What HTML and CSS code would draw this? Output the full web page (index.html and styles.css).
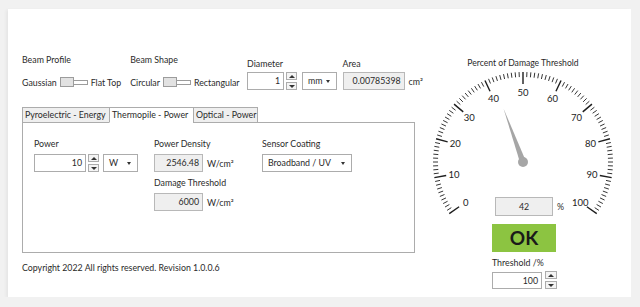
FILE: index.html
```html
<!DOCTYPE html>
<html lang="en">
<head>
    <meta charset="UTF-8">
    <meta name="viewport" content="width=device-width, initial-scale=1.0">
    <title>Damage Threshold Calculator</title>
    <link rel="stylesheet" href="styles.css">
</head>
<body>
    <div class="window">
        <div class="main">
            <div class="beam-row">
                <div class="group profile">
                    <div class="label">Beam Profile</div>
                    <div class="toggle-row">
                        <span>Gaussian</span>
                        <span class="toggle"><span class="thumb"></span><span class="track"></span></span>
                        <span>Flat Top</span>
                    </div>
                </div>
                <div class="group shape">
                    <div class="label">Beam Shape</div>
                    <div class="toggle-row">
                        <span>Circular</span>
                        <span class="toggle"><span class="thumb"></span><span class="track"></span></span>
                        <span>Rectangular</span>
                    </div>
                </div>
                <div class="group diameter">
                    <div class="label">Diameter</div>
                    <div class="control-row">
                        <div class="input diameter-input">1</div>
                        <div class="spin"><span class="up"></span><span class="down"></span></div>
                        <div class="dropdown unit-drop">mm</div>
                    </div>
                </div>
                <div class="group area">
                    <div class="label">Area</div>
                    <div class="control-row">
                        <div class="input readonly area-input">0.00785398</div>
                        <span class="unit">cm²</span>
                    </div>
                </div>
            </div>

            <div class="tabs">
                <div class="tab tab-pyro">Pyroelectric - Energy</div>
                <div class="tab tab-thermo selected">Thermopile - Power</div>
                <div class="tab tab-optical">Optical - Power</div>
            </div>
            <div class="tab-panel">
                <div class="group power">
                    <div class="label">Power</div>
                    <div class="control-row">
                        <div class="input power-input">10</div>
                        <div class="spin"><span class="up"></span><span class="down"></span></div>
                        <div class="dropdown unit-drop">W</div>
                    </div>
                </div>
                <div class="group density">
                    <div class="label">Power Density</div>
                    <div class="control-row">
                        <div class="input readonly small-out">2546.48</div>
                        <span class="unit">W/cm²</span>
                    </div>
                    <div class="label second">Damage Threshold</div>
                    <div class="control-row">
                        <div class="input readonly small-out">6000</div>
                        <span class="unit">W/cm²</span>
                    </div>
                </div>
                <div class="group coating">
                    <div class="label">Sensor Coating</div>
                    <div class="control-row">
                        <div class="dropdown coating-drop">Broadband / UV</div>
                    </div>
                </div>
            </div>
            <div class="copyright">Copyright 2022 All rights reserved. Revision 1.0.0.6</div>
        </div>

        <div class="gauge">
            <div class="gauge-title">Percent of Damage Threshold</div>
            <svg class="dial" viewBox="0 0 200 127" width="200" height="127">
                <g id="ticks" stroke="#1e1e1e"></g>
                <g id="labels" class="dial-labels"></g>
                <polygon id="needle" fill="#a6a6a6"></polygon>
                <circle cx="100" cy="92" r="5" fill="#a6a6a6"></circle>
            </svg>
            <div class="readout">
                <div class="value-row">
                    <div class="input readonly value-box">42</div>
                    <span class="unit">%</span>
                </div>
                <div class="ok">OK</div>
                <div class="label">Threshold /%</div>
                <div class="control-row">
                    <div class="input threshold-input">100</div>
                    <div class="spin"><span class="up"></span><span class="down"></span></div>
                </div>
            </div>
        </div>
    </div>
    <script>
        const cx = 100, cy = 92;
        const startAngle = -125, sweep = 250;
        const value = 42;
        const ns = 'http://www.w3.org/2000/svg';
        const ticks = document.getElementById('ticks');
        const labels = document.getElementById('labels');

        function point(angle, r) {
            const rad = angle * Math.PI / 180;
            return [cx + r * Math.sin(rad), cy - r * Math.cos(rad)];
        }

        for (let v = 0; v <= 100; v++) {
            const a = startAngle + sweep * v / 100;
            const major = v % 10 === 0;
            const [x1, y1] = point(a, major ? 78 : 85);
            const [x2, y2] = point(a, 90);
            const line = document.createElementNS(ns, 'line');
            line.setAttribute('x1', x1);
            line.setAttribute('y1', y1);
            line.setAttribute('x2', x2);
            line.setAttribute('y2', y2);
            line.setAttribute('stroke-width', major ? 1.4 : 0.9);
            ticks.appendChild(line);

            if (major) {
                const [tx, ty] = point(a, 70);
                const text = document.createElementNS(ns, 'text');
                text.setAttribute('x', tx);
                text.setAttribute('y', ty + 3.5);
                text.setAttribute('text-anchor', 'middle');
                text.textContent = v;
                labels.appendChild(text);
            }
        }

        // needle: thin wedge from pivot to value
        const na = startAngle + sweep * value / 100;
        const tip = point(na, 57);
        const left = point(na - 90, 3);
        const right = point(na + 90, 3);
        document.getElementById('needle').setAttribute('points',
            `${left.join(',')} ${tip.join(',')} ${right.join(',')}`);
    </script>
</body>
</html>
```

FILE: styles.css
```css
body {
    margin: 0;
    background: #f1f1f1;
    font-family: Lato, "Open Sans", sans-serif;
    font-size: 8.8px;
    color: #2a2a2a;
}
.window {
    margin: 9px 9px 0 8px;
    height: 288px;
    background: #fff;
    display: flex;
    box-shadow: -2px 1px 3px rgba(0, 0, 0, 0.05);
}
.main {
    width: 415px;
    padding: 43px 0 0 14px;
    box-sizing: border-box;
}
.label {
    line-height: 16px;
    white-space: nowrap;
}
.group {
    display: flex;
    flex-direction: column;
}

/* top row */
.beam-row {
    display: flex;
    align-items: flex-end;
    height: 38px;
}
.profile { width: 111px; gap: 6px; }
.shape { width: 120px; gap: 6px; }
.diameter { width: 98px; }
.toggle-row {
    display: flex;
    align-items: center;
    height: 16px;
    gap: 3px;
    white-space: nowrap;
}
.toggle {
    display: flex;
    align-items: center;
    width: 28px;
}
.thumb {
    width: 14px;
    height: 10px;
    box-sizing: border-box;
    border: 1px solid #9c9c9c;
    background: #e2e2e2;
}
.track {
    flex: 1;
    height: 3px;
    border: 1px solid #9c9c9c;
    border-left: 0;
    background: #fff;
}
.control-row {
    display: flex;
    align-items: center;
    height: 18px;
}
.input {
    height: 18px;
    box-sizing: border-box;
    border: 1px solid #acacac;
    background: #fff;
    text-align: right;
    padding-right: 3px;
    line-height: 16px;
}
.input.readonly {
    background: #efefef;
    border-color: #b8b8b8;
}
.diameter-input { width: 37px; }
.area-input { width: 62px; }
.power-input { width: 52px; }
.small-out { width: 49px; }
.unit {
    margin-left: 4px;
    white-space: nowrap;
}
.spin {
    margin-left: 2px;
    width: 11px;
    height: 18px;
    display: flex;
    flex-direction: column;
    justify-content: space-between;
}
.spin span {
    height: 8px;
    box-sizing: border-box;
    border: 1px solid #acacac;
    background: #f4f4f4;
    display: flex;
    align-items: center;
    justify-content: center;
}
.spin .up::after {
    content: "";
    border-left: 3px solid transparent;
    border-right: 3px solid transparent;
    border-bottom: 3px solid #333;
}
.spin .down::after {
    content: "";
    border-left: 3px solid transparent;
    border-right: 3px solid transparent;
    border-top: 3px solid #333;
}
.dropdown {
    height: 18px;
    box-sizing: border-box;
    border: 1px solid #acacac;
    background: #fff;
    padding-left: 5px;
    line-height: 16px;
    display: flex;
    align-items: center;
    justify-content: space-between;
    padding-right: 6px;
}
.dropdown::after {
    content: "";
    border-left: 2.5px solid transparent;
    border-right: 2.5px solid transparent;
    border-top: 3px solid #333;
}
.unit-drop { width: 35px; margin-left: 4px; }
.diameter .unit-drop { margin-left: 5px; }
.coating-drop { width: 90px; }

/* tabs */
.tabs {
    display: flex;
    margin-top: 17px;
    height: 16px;
    margin-bottom: -1px;
}
.tab {
    height: 16px;
    box-sizing: border-box;
    border: 1px solid #acacac;
    border-right: 0;
    background: #efefef;
    line-height: 14px;
    padding-left: 2px;
    white-space: nowrap;
    overflow: hidden;
    position: relative;
}
.tab-optical { border-right: 1px solid #acacac; }
.tab.selected {
    background: #fff;
    border-bottom-color: #fff;
}
.tab-pyro { width: 87px; }
.tab-thermo { width: 84px; }
.tab-optical { width: 65px; }
.tab-panel {
    width: 393px;
    height: 131px;
    box-sizing: border-box;
    border: 1px solid #acacac;
    padding: 13px 0 0 11px;
    display: flex;
}
.tab-panel .label { margin-bottom: 2px; }
.tab-panel .label.second { margin-top: 3px; }
.power { width: 120px; }
.density { width: 108px; }
.copyright {
    margin-top: 7px;
    line-height: 16px;
}

/* gauge */
.gauge {
    width: 200px;
    padding-top: 47px;
}
.gauge-title {
    text-align: center;
    line-height: 14px;
    font-size: 8.6px;
}
.dial {
    display: block;
    overflow: visible;
}
.dial-labels {
    font-size: 9.5px;
    fill: #222;
}
.readout {
    display: flex;
    flex-direction: column;
    align-items: flex-start;
    padding-left: 69px;
}
.value-row {
    display: flex;
    align-items: center;
    margin-left: 3px;
}
.value-box {
    width: 58px;
    height: 19px;
    text-align: center;
    padding: 0;
    line-height: 17px;
}
.ok {
    margin-top: 8px;
    width: 64px;
    height: 28px;
    background: #8cc441;
    color: #1a1a1a;
    font-weight: bold;
    font-size: 19px;
    line-height: 28px;
    text-align: center;
}
.readout .label {
    margin-top: 3px;
}
.threshold-input {
    width: 50px;
    height: 17px;
}
.readout .spin {
    margin-left: 3px;
    width: 12px;
}
```
